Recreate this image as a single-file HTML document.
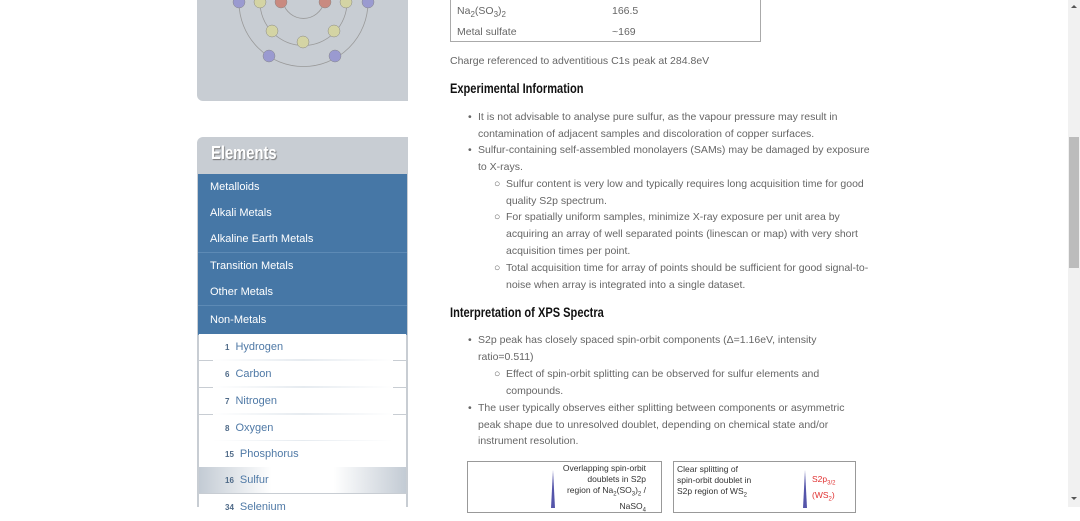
<!DOCTYPE html>
<html><head><style>
body{margin:0;width:1080px;height:507px;overflow:hidden;background:#fff;font-family:"Liberation Sans",Arial,sans-serif;color:#666;position:relative}
.a{position:absolute}
.l{position:absolute;font-size:10.5px;line-height:16px;white-space:nowrap}
h3{position:absolute;margin:0;font-size:13.5px;font-weight:bold;color:#111;transform:scaleX(.82);transform-origin:left top;white-space:nowrap}
.blue{position:absolute;left:198px;width:209px;height:26px;background:#4677a6;color:#fff;font-size:11px;line-height:26px;border-bottom:1px solid #5d8ab5}
.blue span{padding-left:12px}
.wi{position:absolute;left:199px;width:207px;height:26px;background:#fff;font-size:11px;line-height:26px;color:#4f79a6}
.wi b{font-size:8px;color:#4f6a88;margin-left:26px;margin-right:6px}
.sep{position:absolute;left:213px;width:180px;height:2px;background:linear-gradient(90deg,#fff,#e6ebf0,#fff)}
</style></head><body>
<div class="a" style="left:197px;top:0;width:211px;height:101px;background:#c8cdd3;border-radius:0 0 0 6px"></div>
<svg class="a" style="left:197px;top:0" width="211" height="101">
<g fill="none" stroke="#999" stroke-width="0.8">
<path d="M42 2 A64 64 0 0 0 171 2"/><path d="M63 2 A43 43 0 0 0 150 2"/><path d="M86 2 A21 21 0 0 0 127 2"/>
</g>
<g stroke="#888" stroke-width=".5">
<circle cx="42" cy="2" r="6" fill="#9a9ad0"/><circle cx="171" cy="2" r="6" fill="#9a9ad0"/>
<circle cx="63" cy="2" r="6" fill="#d4d4a4"/><circle cx="149" cy="2" r="6" fill="#d4d4a4"/>
<circle cx="84" cy="2" r="6" fill="#c98a80"/><circle cx="128" cy="2" r="6" fill="#c98a80"/>
<circle cx="75" cy="31" r="6" fill="#d4d4a4"/><circle cx="137" cy="31" r="6" fill="#d4d4a4"/><circle cx="106" cy="42" r="6" fill="#d4d4a4"/>
<circle cx="72" cy="56" r="6" fill="#9a9ad0"/><circle cx="138" cy="56" r="6" fill="#9a9ad0"/>
</g></svg>
<div class="a" style="left:197px;top:137px;width:211px;height:370px;background:#c8cdd3;border-radius:6px 0 0 0"></div>
<div class="a" style="left:211px;top:143px;font-size:18px;font-weight:bold;color:#fff;text-shadow:1px 1px 1px #777;transform:scaleX(.82);transform-origin:left top">Elements</div>
<div class="blue" style="top:174px"><span>Metalloids</span></div>
<div class="blue" style="top:200px"><span>Alkali Metals</span></div>
<div class="blue" style="top:226px"><span>Alkaline Earth Metals</span></div>
<div class="blue" style="top:253px"><span>Transition Metals</span></div>
<div class="blue" style="top:279px"><span>Other Metals</span></div>
<div class="blue" style="top:306px;height:28px;line-height:28px"><span>Non-Metals</span></div>
<div class="wi" style="top:334px"><b>1</b>Hydrogen</div>
<div class="sep" style="top:359px"></div>
<div class="wi" style="top:361px"><b>6</b>Carbon</div>
<div class="sep" style="top:386px"></div>
<div class="wi" style="top:388px"><b>7</b>Nitrogen</div>
<div class="sep" style="top:413px"></div>
<div class="wi" style="top:415px"><b>8</b>Oxygen</div>
<div class="sep" style="top:440px"></div>
<div class="wi" style="top:441px"><b>15</b>Phosphorus</div>
<div class="wi" style="top:467px;background:linear-gradient(90deg,#c3cbd4,#fff 35%,#fff 65%,#c3cbd4)"><b>16</b>Sulfur</div>
<div class="wi" style="top:494px"><b>34</b>Selenium</div>

<div class="a" style="left:450px;top:-1px;width:309px;height:42px;border:1px solid #aaa;border-top:none"></div>
<div class="l" style="left:457px;top:3px">Na<sub style="font-size:8px">2</sub>(SO<sub style="font-size:8px">3</sub>)<sub style="font-size:8px">2</sub></div>
<div class="l" style="left:612px;top:3px">166.5</div>
<div class="l" style="left:457px;top:24px">Metal sulfate</div>
<div class="l" style="left:612px;top:24px">~169</div>
<div class="l" style="left:450px;top:53px">Charge referenced to adventitious C1s peak at 284.8eV</div>
<h3 style="left:450px;top:81px">Experimental Information</h3>

<div class="l" style="left:468px;top:109px">•</div>
<div class="l" style="left:478px;top:109px">It is not advisable to analyse pure sulfur, as the vapour pressure may result in</div>
<div class="l" style="left:478px;top:126px">contamination of adjacent samples and discoloration of copper surfaces.</div>
<div class="l" style="left:468px;top:142px">•</div>
<div class="l" style="left:478px;top:142px">Sulfur-containing self-assembled monolayers (SAMs) may be damaged by exposure</div>
<div class="l" style="left:478px;top:159px">to X-rays.</div>
<div class="l" style="left:494px;top:176px">○</div>
<div class="l" style="left:506px;top:176px">Sulfur content is very low and typically requires long acquisition time for good</div>
<div class="l" style="left:506px;top:193px">quality S2p spectrum.</div>
<div class="l" style="left:494px;top:209px">○</div>
<div class="l" style="left:506px;top:209px">For spatially uniform samples, minimize X-ray exposure per unit area by</div>
<div class="l" style="left:506px;top:226px">acquiring an array of well separated points (linescan or map) with very short</div>
<div class="l" style="left:506px;top:243px">acquisition times per point.</div>
<div class="l" style="left:494px;top:260px">○</div>
<div class="l" style="left:506px;top:260px">Total acquisition time for array of points should be sufficient for good signal-to-</div>
<div class="l" style="left:506px;top:277px">noise when array is integrated into a single dataset.</div>

<h3 style="left:450px;top:305px">Interpretation of XPS Spectra</h3>
<div class="l" style="left:468px;top:332px">•</div>
<div class="l" style="left:478px;top:332px">S2p peak has closely spaced spin-orbit components (Δ=1.16eV, intensity</div>
<div class="l" style="left:478px;top:349px">ratio=0.511)</div>
<div class="l" style="left:494px;top:366px">○</div>
<div class="l" style="left:506px;top:366px">Effect of spin-orbit splitting can be observed for sulfur elements and</div>
<div class="l" style="left:506px;top:383px">compounds.</div>
<div class="l" style="left:468px;top:400px">•</div>
<div class="l" style="left:478px;top:400px">The user typically observes either splitting between components or asymmetric</div>
<div class="l" style="left:478px;top:417px">peak shape due to unresolved doublet, depending on chemical state and/or</div>
<div class="l" style="left:478px;top:433px">instrument resolution.</div>

<div class="a" style="left:467px;top:461px;width:193px;height:50px;border:1px solid #999"></div>
<div class="a" style="left:562px;top:463px;font-size:8.5px;line-height:11px;color:#333;text-align:right;width:84px">Overlapping spin-orbit doublets in S2p region of Na<sub style="font-size:6px">2</sub>(SO<sub style="font-size:6px">3</sub>)<sub style="font-size:6px">2</sub> / NaSO<sub style="font-size:6px">4</sub></div>
<svg class="a" style="left:549px;top:468px" width="10" height="40"><path d="M2 40 L4 2 L6 40 Z" fill="#5555aa"/></svg>
<div class="a" style="left:673px;top:461px;width:181px;height:50px;border:1px solid #999"></div>
<div class="a" style="left:677px;top:464px;font-size:8.5px;line-height:11px;color:#333;width:80px">Clear splitting of spin-orbit doublet in S2p region of WS<sub style="font-size:6px">2</sub></div>
<svg class="a" style="left:801px;top:468px" width="10" height="40"><path d="M2 40 L4 2 L6 40 Z" fill="#5555aa"/></svg>
<div class="a" style="left:812px;top:474px;font-size:8.5px;line-height:11px;color:#e03030">S2p<sub style="font-size:6px">3/2</sub><br>(WS<sub style="font-size:6px">2</sub>)</div>

<div class="a" style="left:1068px;top:0;width:12px;height:507px;background:#f1f1f1"></div>
<div class="a" style="left:1069px;top:137px;width:10px;height:131px;background:#bcbcbc"></div>
<div class="a" style="left:1071px;top:2px;width:0;height:0;border:3px solid transparent;border-bottom:3px solid #555"></div>
<div class="a" style="left:1071px;top:497px;width:0;height:0;border:3px solid transparent;border-top:3px solid #555"></div>
</body></html>
